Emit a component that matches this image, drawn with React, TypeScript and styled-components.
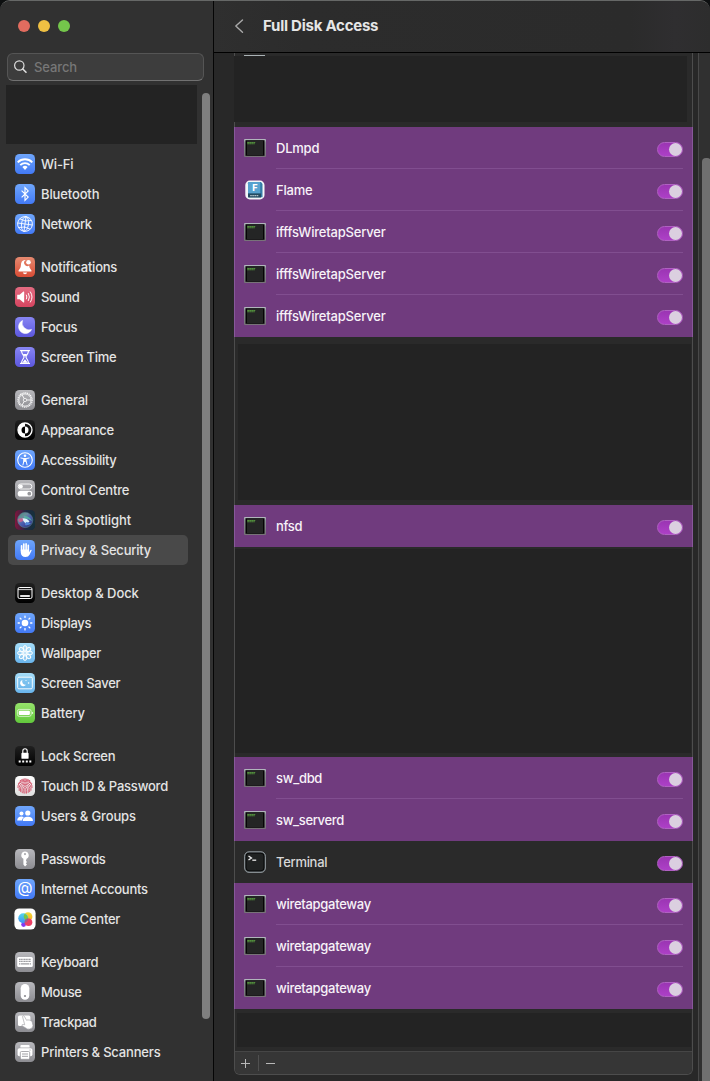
import React from "react";
import styled, { createGlobalStyle } from "styled-components";

const GlobalStyle = createGlobalStyle`
  * { box-sizing: border-box; }
  body {
    margin: 0;
    background: #0d0f10;
    font-family: Inter, "Liberation Sans", sans-serif;
    font-size: 13px;
    color: #e4e4e4;
    overflow: hidden;
  }
`;

const Window = styled.div`
  display: flex;
  width: 710px;
  height: 1081px;
  border-top: 1px solid #666867;
  border-radius: 10px 10px 0 0;
  overflow: hidden;
  background: #282828;
`;

const Sidebar = styled.aside`
  display: flex;
  flex-direction: column;
  width: 214px;
  flex: none;
  background: #313131;
  border-right: 1px solid #050505;
`;

const Lights = styled.div`
  display: flex;
  gap: 8px;
  padding: 19px 0 0 18px;
  height: 52px;
`;

const Light = styled.span<{ $color: string }>`
  width: 12px;
  height: 12px;
  border-radius: 50%;
  background: ${(p) => p.$color};
`;

const SearchField = styled.div`
  display: flex;
  align-items: center;
  gap: 7px;
  width: 197px;
  height: 28px;
  margin-left: 7px;
  padding-left: 6px;
  border: 1px solid #555;
  border-bottom-color: #717171;
  border-radius: 6px;
  background: #3d3d3d;
  color: #777;
  letter-spacing: -0.1px;
  font-weight: 500;
`;

const SidebarBody = styled.div`
  display: flex;
  margin-top: 4px;
  flex: 1;
`;

const SidebarContent = styled.div`
  width: 202px;
`;

const AccountMask = styled.div`
  width: 191px;
  height: 59px;
  margin-left: 6px;
  background: #232323;
`;

const SidebarThumb = styled.div`
  width: 8px;
  height: 926px;
  margin-top: 8px;
  border-radius: 4px;
  background: #7f7f7f;
`;

const Nav = styled.nav`
  display: flex;
  flex-direction: column;
  gap: 13px;
  padding: 5px 0 0 8px;
`;

const NavItem = styled.div<{ $selected?: boolean }>`
  display: flex;
  align-items: center;
  gap: 6px;
  width: 180px;
  height: 30px;
  padding-left: 7px;
  border-radius: 5px;
  background: ${(p) => (p.$selected ? "#494949" : "transparent")};
`;

const NavLabel = styled.span<{ $spacing: number }>`
  white-space: nowrap;
  font-weight: 470;
  letter-spacing: ${(p) => p.$spacing}px;
`;

const Tile = styled.span<{ $top: string; $bottom: string }>`
  display: block;
  flex: none;
  width: 20px;
  height: 20px;
  border-radius: 4.5px;
  background: linear-gradient(${(p) => p.$top}, ${(p) => p.$bottom});
  svg { display: block; }
`;

const Main = styled.main`
  display: flex;
  flex-direction: column;
  flex: 1;
  min-width: 0;
`;

const Header = styled.header`
  display: flex;
  align-items: center;
  gap: 17px;
  height: 52px;
  flex: none;
  padding: 0 0 1px 18px;
  border-bottom: 1px solid #000;
  background: linear-gradient(90deg, #2f2f2f, #2c2c2c 18%, #2b2b2b 84%, #2f2e30 93%, #2d2d2d);
`;

const Title = styled.h1`
  margin: 0 0 1px;
  font-size: 15px;
  font-weight: 700;
  letter-spacing: -0.24px;
  color: #e6e6e6;
`;

const Body = styled.div`
  display: flex;
  flex: 1;
  min-height: 0;
  padding-left: 20px;
`;

const List = styled.section`
  display: flex;
  flex-direction: column;
  width: 459px;
  height: 1022px;
  border: 1px solid #4d4d4d;
  border-top: none;
  border-radius: 0 0 6px 6px;
  background: #2a2a2a;
`;

const TopStrip = styled.div`
  height: 74px;
  padding-top: 2px;
`;

const IconSliver = styled.div`
  width: 21px;
  height: 1px;
  margin-left: 9px;
  background: #aab2b5;
`;

const Mask = styled.div<{ $height: number; $before?: number; $after?: number; $left?: number; $right?: number }>`
  flex: none;
  height: ${(p) => p.$height}px;
  margin: ${(p) => p.$before ?? 0}px ${(p) => p.$right ?? 1}px ${(p) => p.$after ?? 0}px ${(p) => p.$left ?? 0}px;
  background: #232323;
`;

const Rows = styled.div<{ $highlight?: boolean }>`
  margin: 0 -1px;
  flex: none;
  border: solid ${(p) => (p.$highlight ? "#87589a" : "#4d4d4d")};
  border-width: 0 1px;
  background: ${(p) => (p.$highlight ? "#703b7e" : "#2a2a2a")};
  color: ${(p) => (p.$highlight ? "#f7f2f8" : "#d8d8d8")};
  font-weight: ${(p) => (p.$highlight ? 550 : 450)};
`;

const Row = styled.div`
  display: flex;
  height: 42px;
  padding: 0 9px 0 9px;
`;

const RowIcon = styled.div`
  display: flex;
  align-items: center;
  width: 32px;
  flex: none;
`;

const RowContent = styled.div<{ $divided?: boolean }>`
  display: flex;
  flex: 1;
  align-items: center;
  justify-content: space-between;
  padding-top: ${(p) => (p.$divided ? 2 : 1)}px;
  border-bottom: ${(p) => (p.$divided ? "1px solid #814e90" : "none")};
`;

const RowName = styled.span<{ $spacing: number }>`
  margin-bottom: 1px;
  letter-spacing: ${(p) => p.$spacing}px;
`;

const Switch = styled.span`
  display: flex;
  justify-content: flex-end;
  width: 26px;
  height: 15px;
  margin-top: 2px;
  border: 1px solid #b061c2;
  border-radius: 8px;
  background: linear-gradient(#9b35b3, #ad40c7);
`;

const Knob = styled.span`
  width: 13px;
  height: 13px;
  border-radius: 50%;
  background: #dbcfe0;
`;

const Footer = styled.footer`
  display: flex;
  align-items: center;
  flex: 1;
  border-top: 1px solid #464646;
  border-radius: 0 0 5px 5px;
  background: #363636;
  svg { display: block; }
`;

const Track = styled.div`
  width: 12px;
  height: 100%;
  margin-left: 5px;
  padding: 105px 0 0 3px;
  border-left: 1px solid #494949;
  background: #303030;
`;

const Thumb = styled.div`
  width: 9px;
  height: 940px;
  border-radius: 4px 4px 0 0;
  background: #707070;
`;

const W = "#fff";
const BLUE: [string, string] = ["#6fa6fb", "#4279f5"];
const GRAY: [string, string] = ["#b8b8bc", "#8c8c91"];
const BLACK: [string, string] = ["#202020", "#000"];
const INDIGO: [string, string] = ["#8785f3", "#5c57de"];
const SKY: [string, string] = ["#a6defa", "#69b4ec"];

const petals = [0, 45, 90, 135, 180, 225, 270, 315];

type Entry = { name: string; colors: [string, string]; art: React.ReactNode; spacing: number };

const groups: Entry[][] = [
  [
    { name: "Wi-Fi", spacing: -0.2, colors: BLUE, art: (
      <g fill="none" stroke={W} strokeWidth="1.9">
        <path d="M2.7 8.3A10.3 10.3 0 0 1 17.3 8.3" /><path d="M5.3 11.1A6.6 6.6 0 0 1 14.7 11.1" />
        <path d="M10 15.9 7.4 13.1A3.7 3.7 0 0 1 12.6 13.1Z" fill={W} stroke="none" />
      </g>) },
    { name: "Bluetooth", spacing: -0.13, colors: BLUE, art: (
      <path d="M6.6 6.7 13.2 13.1 10 16.4V3.6L13.2 6.9 6.6 13.3" fill="none" stroke={W} strokeWidth="1.15" />) },
    { name: "Network", spacing: -0.32, colors: BLUE, art: (
      <g fill="none" stroke={W} strokeWidth=".85" transform="rotate(8 10 10)">
        <circle cx="10" cy="10" r="7.4" /><ellipse cx="10" cy="10" rx="3.5" ry="7.4" />
        <path d="M10 2.6V17.4M2.6 10H17.4M4.2 5.6Q10 8.4 15.8 5.6M4.2 14.4Q10 11.6 15.8 14.4" />
      </g>) },
  ],
  [
    { name: "Notifications", spacing: -0.22, colors: ["#e58a70", "#d94c35"], art: (
      <g fill={W}>
        <path d="M10 3C7 3.2 6 5.4 5.9 8.2 5.8 11 4.6 12 3.7 13.2 3.2 14 3.5 14.6 4.2 14.6H15.8C16.5 14.6 16.8 14 16.3 13.2 15.4 12 14.4 11.2 14.2 8.6A3.3 3.3 0 0 1 10.7 3Z" />
        <circle cx="13.5" cy="5.2" r="2.3" /><path d="M7.8 15.6H12.2Q11.7 17.3 10 17.3T7.8 15.6Z" />
      </g>) },
    { name: "Sound", spacing: -0.3, colors: ["#e36b81", "#d64560"], art: (
      <g fill="none" stroke={W} strokeLinecap="round">
        <path d="M2.2 7.7H4.6L8.4 4.5Q9.2 4.1 9.2 5V15Q9.2 15.9 8.4 15.5L4.6 12.3H2.2Z" fill={W} stroke="none" />
        <path d="M11.4 8Q12.5 10 11.4 12" strokeWidth="1" /><path d="M13.4 6.4Q15.6 10 13.4 13.6M15.4 4.9Q18.8 10 15.4 15.1" strokeWidth=".95" />
      </g>) },
    { name: "Focus", spacing: -0.22, colors: INDIGO, art: (
      <path d="M7.6 3.5A6.8 6.8 0 1 0 16.6 12.4 7 7 0 0 1 7.6 3.5Z" fill={W} stroke={W} strokeWidth=".5" strokeLinejoin="round" />) },
    { name: "Screen Time", spacing: -0.26, colors: INDIGO, art: (
      <g fill="none" stroke={W} strokeLinecap="round">
        <path d="M5.6 3.6H14.4M5.6 16.4H14.4" strokeWidth="1.4" />
        <path d="M6.6 4C6.5 7.3 9 8.3 9 10S6.5 12.7 6.6 16M13.4 4C13.5 7.3 11 8.3 11 10S13.5 12.7 13.4 16" strokeWidth="1.1" />
        <path d="M7.7 7H12.3L10 9.8ZM7.2 15.7 10 12.2 12.8 15.7Z" fill={W} stroke="none" />
      </g>) },
  ],
  [
    { name: "General", spacing: -0.22, colors: GRAY, art: (
      <g fill="none" stroke={W}>
        <circle cx="10" cy="10" r="6.2" strokeWidth=".9" />
        <circle cx="10" cy="10" r="7.2" strokeWidth="1.1" strokeDasharray="1.1 .785" />
        <circle cx="10" cy="10" r="1.7" strokeWidth=".7" />
        <path d="M11.7 10H16M9.2 8.6 7 4.7M9.2 11.4 7 15.3" strokeWidth=".9" />
      </g>) },
    { name: "Appearance", spacing: -0.3, colors: BLACK, art: (
      <g>
        <circle cx="10" cy="10" r="7" fill="none" stroke={W} strokeWidth="1.3" />
        <path d="M10 3A7 7 0 0 0 10 17Z" fill={W} />
        <path d="M10 6.5A3.5 3.5 0 0 0 10 13.5Z" fill="#000" /><path d="M10 6.5A3.5 3.5 0 0 1 10 13.5Z" fill={W} />
      </g>) },
    { name: "Accessibility", spacing: -0.27, colors: BLUE, art: (
      <g fill="none" stroke={W} strokeLinecap="round" strokeLinejoin="round">
        <circle cx="10" cy="10" r="7.3" strokeWidth="1.1" /><circle cx="10" cy="5.8" r="1.3" fill={W} stroke="none" />
        <path d="M5.9 8 8.9 8.6H11.1L14.1 8" strokeWidth="1" />
        <path d="M8.8 11.4 7.9 15M11.2 11.4 12.1 15" strokeWidth="1" /><path d="M8.9 8.6H11.1V11.4H8.9Z" fill={W} strokeWidth=".8" />
      </g>) },
    { name: "Control Centre", spacing: -0.18, colors: GRAY, art: (
      <g>
        <rect x="3.2" y="4" width="13.6" height="5" rx="2.5" fill="none" stroke={W} strokeWidth=".9" /><circle cx="5.8" cy="6.5" r="2" fill={W} />
        <rect x="2.7" y="10.8" width="14.6" height="5.8" rx="2.9" fill={W} /><circle cx="14.3" cy="13.7" r="1.9" fill="#97979b" />
      </g>) },
    { name: "Siri & Spotlight", spacing: -0.07, colors: ["#3a1830", "#171d38"], art: (
      <g>
        <defs>
          <linearGradient id="siriEdge"><stop offset="0" stopColor="#7f163d" /><stop offset=".55" stopColor="#202944" /><stop offset="1" stopColor="#15313a" /></linearGradient>
          <linearGradient id="siriBall" x2=".8" y2="1"><stop stopColor="#349279" /><stop offset=".35" stopColor="#6b8b9a" /><stop offset=".6" stopColor="#4a5cb1" /><stop offset="1" stopColor="#303778" /></linearGradient>
        </defs>
        <rect width="20" height="20" rx="4.5" fill="url(#siriEdge)" />
        <circle cx="10.2" cy="10" r="7.6" fill="url(#siriBall)" stroke="#5b7f96" strokeWidth=".6" />
        <path d="M3 9Q7 7 10 9.6 6 13 4 12Z" fill="#d65c8e" opacity=".8" /><path d="M9 6Q15 6 17 11 12 8 9 9Z" fill="#55bda3" opacity=".75" />
        <path d="M7.5 8.2Q12 8 14.5 11.5 12 14 10.4 13.2 8 12 7.5 8.2Z" fill="#d9eff8" /><path d="M11 12Q14 12 16 13.5 13 16 10 15Z" fill="#5085d7" />
      </g>) },
    { name: "Privacy & Security", spacing: -0.2, colors: BLUE, art: (
      <g fill="none" stroke={W} strokeLinecap="round">
        <path d="M6.6 5.8V11M8.8 4V10M11.1 3.9V10M13.3 5.2V11" strokeWidth="1.65" />
        <path d="M5.8 9.4H14.1V12.2L15.5 10Q16.6 9.3 16.7 10.3L14.7 14.4Q13.4 17 10.5 17C7.6 17 5.8 15 5.8 12.4Z" fill={W} stroke="none" />
      </g>) },
  ],
  [
    { name: "Desktop & Dock", spacing: -0.08, colors: BLACK, art: (
      <g fill="none" stroke={W}><rect x="3" y="4.5" width="14" height="11" rx="1.5" strokeWidth="1" /><path d="M3 6.6H17" strokeWidth=".8" /><path d="M5.2 13H14.8" strokeWidth="1.8" /></g>) },
    { name: "Displays", spacing: -0.3, colors: BLUE, art: (
      <g stroke={W} strokeWidth="1.3" strokeLinecap="round"><circle cx="10" cy="10" r="3.3" fill={W} stroke="none" />
        {petals.map((a) => <path key={a} d="M10 3.1V4.4" transform={`rotate(${a} 10 10)`} />)}</g>) },
    { name: "Wallpaper", spacing: -0.28, colors: SKY, art: (
      <g fill="none" stroke={W} strokeWidth=".95"><circle cx="10" cy="10" r="1.9" fill={W} fillOpacity=".5" />
        {petals.map((a) => <ellipse key={a} cx="10" cy="5" rx="1.8" ry="2.4" fill={W} fillOpacity=".2" transform={`rotate(${a} 10 10)`} />)}</g>) },
    { name: "Screen Saver", spacing: -0.29, colors: SKY, art: (
      <g><rect x="2.7" y="4.2" width="14.6" height="11.6" rx="1.2" fill="#5fb0e6" fillOpacity=".35" stroke={W} strokeWidth=".9" />
        <path d="M7.4 7A3.2 3.2 0 1 0 11 11.8 3.5 3.5 0 0 1 7.4 7Z" fill={W} /><circle cx="11" cy="7.5" r=".6" fill={W} /><circle cx="13.6" cy="10" r=".8" fill={W} /></g>) },
    { name: "Battery", spacing: -0.1, colors: ["#96e36b", "#62c83c"], art: (
      <g><rect x="2.4" y="6.4" width="13.8" height="7" rx="2" fill="none" stroke={W} strokeWidth=".8" strokeOpacity=".8" /><rect x="3.7" y="7.7" width="11.2" height="4.4" rx="1" fill={W} /><path d="M17.2 8.7Q18.2 9.2 18.2 9.9T17.2 11.1Z" fill={W} /></g>) },
  ],
  [
    { name: "Lock Screen", spacing: -0.27, colors: BLACK, art: (
      <g fill={W}><rect x="6.4" y="6.8" width="7.2" height="6" rx=".9" /><path d="M7.8 7V4.9A2.2 2.2 0 0 1 12.2 4.9V7" fill="none" stroke={W} strokeWidth="1.1" />
        <path d="M3.7 14.4h2v2.1h-2zM7.2 14.4h2v2.1h-2zM10.8 14.4h2v2.1h-2zM14.3 14.4h2v2.1h-2z" /></g>) },
    { name: "Touch ID & Password", spacing: -0.22, colors: ["#fff", "#dedede"], art: (
      <g fill="none" stroke="#d4576f" strokeWidth=".95" strokeLinecap="round">
        <path d="M5 4.7Q10 1 15 4.7M3.2 7.5Q5.2 4.2 10 4.1T16.8 7.5M2.9 11.5Q2.5 5.6 10 5.5T17.1 11.5M4.2 14.5Q3 7 10 6.9T16 14.3M5.7 15.8Q4.2 8.4 10 8.3T14.7 15.7M7.3 16.8Q5.8 9.8 10 9.7T13.2 16.5M9 17.2Q7.8 11.1 10 11.1T11.5 17.2M10 12.6V17" />
      </g>) },
    { name: "Users & Groups", spacing: -0.15, colors: BLUE, art: (
      <g fill={W}><circle cx="6.5" cy="7.4" r="2" /><path d="M2.2 14.4C2.2 11.7 4 10.5 6.4 10.5Q8 10.5 8.8 11.2 7.1 12.5 7 14.4Z" /><circle cx="12.8" cy="7" r="2.6" /><path d="M7.8 14.9C7.7 12 9.9 10.7 12.8 10.7S18 12 17.9 14.9Z" /></g>) },
  ],
  [
    { name: "Passwords", spacing: -0.38, colors: GRAY, art: (
      <g fill={W}><path fillRule="evenodd" d="M10 2.5A3.8 3.8 0 0 0 8.4 9.7V15.6L10 17.4 12 15.4 10.8 14.2 12 13 10.9 11.8 11.6 9.7A3.8 3.8 0 0 0 10 2.5ZM10 4A1.1 1.1 0 1 1 10 6.2 1.1 1.1 0 0 1 10 4Z" /></g>) },
    { name: "Internet Accounts", spacing: -0.23, colors: BLUE, art: (
      <text x="10" y="14.4" textAnchor="middle" fill={W} fontSize="15.5" fontFamily="Inter, sans-serif">@</text>) },
    { name: "Game Center", spacing: -0.23, colors: ["#fff", "#fff"], art: (
      <g>
        <defs><linearGradient id="gcBlue" x2="0" y2="1"><stop stopColor="#55d7ed" /><stop offset="1" stopColor="#3f8df5" /></linearGradient><linearGradient id="gcYellow" x2="0" y2="1"><stop stopColor="#f5dc36" /><stop offset="1" stopColor="#f3a927" /></linearGradient></defs>
        <rect x="-.6" y="-.6" width="21.2" height="21.2" rx="4.8" fill="#fff" />
        <circle cx="8.6" cy="15.6" r="2.4" fill="#853af1" /><circle cx="13" cy="7.7" r="4.4" fill="url(#gcYellow)" /><circle cx="8.3" cy="9.2" r="5" fill="url(#gcBlue)" />
        <path d="M9.7 4.8A5 5 0 0 1 12.3 12 4.5 4.5 0 0 1 9.7 4.8Z" fill="#76c848" /><circle cx="13.5" cy="13.2" r="3.8" fill="#ec4165" /><path d="M9.7 13.2A3.8 3.8 0 0 1 13.2 9.6 5 5 0 0 1 9.8 14Z" fill="#9a638c" />
      </g>) },
  ],
  [
    { name: "Keyboard", spacing: -0.3, colors: GRAY, art: (
      <g><rect x="2.2" y="5" width="15.6" height="10" rx="1.5" fill={W} /><path d="M4 7.3H16M4 9.4H16" stroke="#9c9ca0" strokeWidth="1.3" strokeDasharray="1.3 .35" /><path d="M4 11.8H5.4M6 11.8H14M14.6 11.8H16" stroke="#9c9ca0" strokeWidth="1.3" /></g>) },
    { name: "Mouse", spacing: -0.3, colors: GRAY, art: (
      <g><rect x="5.7" y="2" width="8.6" height="15.8" rx="4.3" fill={W} /><circle cx="10" cy="14" r="1.1" fill="#8c8c91" /></g>) },
    { name: "Trackpad", spacing: -0.37, colors: GRAY, art: (
      <g><rect x="3" y="3.5" width="12.4" height="10.5" rx="1.5" fill={W} /><path d="M7.5 4.5Q8 3 9.3 4.3L11.7 8.4Q13 7.2 14 8.2 15 7.6 15.7 8.7 17 8.7 17.2 10L18 13.5Q17.9 16.7 14.5 17.1 12 17.4 10.7 15.9L6.9 13.8Q6.7 12.4 8.1 12.5L9.7 12.7Z" fill={W} stroke="#9b9b9f" strokeWidth=".6" /></g>) },
    { name: "Printers & Scanners", spacing: -0.17, colors: GRAY, art: (
      <g><path d="M5.4 5.6V4Q5.4 3 6.4 3H13.6Q14.6 3 14.6 4V5.6Z" fill={W} /><rect x="2.6" y="6.3" width="14.8" height="8" rx="1.8" fill={W} /><rect x="5.3" y="9.5" width="9.4" height="7.8" rx="1.2" fill={W} stroke="#95959a" strokeWidth=".8" /><path d="M7 12H13M7 14.3H13" stroke="#95959a" strokeWidth=".9" /><circle cx="15" cy="8" r=".6" fill="#95959a" /></g>) },
  ],
];

const ExecIcon = () => (
  <svg width="22" height="20" viewBox="0 0 22 20">
    <defs><linearGradient id="bezel" x2="0" y2="1"><stop stopColor="#b5bac0" /><stop offset=".2" stopColor="#888b91" /><stop offset="1" stopColor="#777278" /></linearGradient></defs>
    <rect x="0" y="1.1" width="22" height="17.8" rx="1" fill="url(#bezel)" />
    <rect x="1.5" y="2.2" width="19" height="15.6" fill="#050505" />
    <rect x="3" y="3" width="16" height="14" fill="#242525" />
    <path d="M3.3 4.5H11.5M3.3 5.8H10.7" stroke="#579b3f" strokeWidth="1.1" strokeDasharray="1.6 .4" />
  </svg>
);

const FlameIcon = () => (
  <svg width="22" height="22" viewBox="0 0 22 22">
    <rect x="1.3" y="1.6" width="19.2" height="18.8" rx="4.5" fill="#f4f7f9" />
    <path d="M4 4.2Q4 3 5.2 3H17L18.5 5V18.3H4Z" fill="#347ba5" /><path d="M4 4.2Q4 3 5.2 3H16.2V14.5H4Z" fill="#57a2cf" />
    <path d="M4 14.5H17V18.6H5Q4 18.6 4 17.6Z" fill="#244b61" />
    <text x="10.9" y="12.2" fontSize="9" fontWeight="800" fontFamily="Inter, sans-serif" fill="#fff" textAnchor="middle">F</text>
    <path d="M6.2 16.6H14.8" stroke="#afc0c9" strokeWidth="1.2" strokeDasharray="1.6 .5" />
  </svg>
);

const TerminalIcon = () => (
  <svg width="22" height="22" viewBox="0 0 22 22">
    <rect x=".5" y=".7" width="21" height="20.8" rx="4.5" fill="#555b5e" stroke="#858c90" />
    <rect x="2" y="2.2" width="18" height="17.6" rx="3" fill="#202222" stroke="#050606" />
    <path d="M4.5 5 7.4 7 4.5 9" fill="none" stroke="#eee" strokeWidth="1.4" /><path d="M8.3 9.2H12.2" stroke="#ddd" strokeWidth="1.4" />
  </svg>
);

const icons = { exec: ExecIcon, flame: FlameIcon, terminal: TerminalIcon };

type AppEntry = { name: string; icon?: keyof typeof icons; spacing: number };

const AppRows = ({ items, highlight }: { items: AppEntry[]; highlight?: boolean }) => (
  <Rows $highlight={highlight}>
    {items.map((item, i) => {
      const Icon = icons[item.icon ?? "exec"];
      return (
        <Row key={i}>
          <RowIcon><Icon /></RowIcon>
          <RowContent $divided={i < items.length - 1}>
            <RowName $spacing={item.spacing}>{item.name}</RowName>
            <Switch><Knob /></Switch>
          </RowContent>
        </Row>
      );
    })}
  </Rows>
);

const wiretap: AppEntry = { name: "ifffsWiretapServer", spacing: -0.2 };
const gateway: AppEntry = { name: "wiretapgateway", spacing: -0.29 };

export default function App() {
  return (
    <>
      <GlobalStyle />
      <Window>
        <Sidebar>
          <Lights><Light $color="#e26c5f" /><Light $color="#efc043" /><Light $color="#74c64b" /></Lights>
          <SearchField>
            <svg width="13" height="14" viewBox="0 0 13 14" fill="none" stroke="#ddd" strokeLinecap="round">
              <circle cx="5.3" cy="5.5" r="4.7" strokeWidth="1.2" /><path d="M8.8 9 12 12.3" strokeWidth="1.6" />
            </svg>
            Search
          </SearchField>
          <SidebarBody>
            <SidebarContent>
              <AccountMask />
              <Nav>
                {groups.map((group, g) => (
                  <div key={g}>
                    {group.map((e) => (
                      <NavItem key={e.name} $selected={e.name === "Privacy & Security"}>
                        <Tile $top={e.colors[0]} $bottom={e.colors[1]}>
                          <svg width="20" height="20" viewBox="0 0 20 20" overflow="visible">{e.art}</svg>
                        </Tile>
                        <NavLabel $spacing={e.spacing}>{e.name}</NavLabel>
                      </NavItem>
                    ))}
                  </div>
                ))}
              </Nav>
            </SidebarContent>
            <SidebarThumb />
          </SidebarBody>
        </Sidebar>
        <Main>
          <Header>
            <svg width="14" height="16" viewBox="0 0 14 16" fill="none" stroke="#a9a9a9" strokeWidth="1.4" strokeLinecap="round" strokeLinejoin="round"><path d="M10.5 1.9 3.8 8.1 10.5 14.3" /></svg>
            <Title>Full Disk Access</Title>
          </Header>
          <Body>
            <List>
              <TopStrip>
                <IconSliver />
                <Mask $height={66} $left={-1} $right={5} />
              </TopStrip>
              <AppRows highlight items={[{ name: "DLmpd", spacing: -0.22 }, { name: "Flame", icon: "flame", spacing: -0.2 }, wiretap, wiretap, wiretap]} />
              <Mask $height={156} $before={7} $after={5} $left={3} />
              <AppRows highlight items={[{ name: "nfsd", spacing: -0.35 }]} />
              <Mask $height={204} $before={2} $after={4} />
              <AppRows highlight items={[{ name: "sw_dbd", spacing: -0.3 }, { name: "sw_serverd", spacing: -0.35 }]} />
              <AppRows items={[{ name: "Terminal", icon: "terminal", spacing: -0.3 }]} />
              <AppRows highlight items={[gateway, gateway, gateway]} />
              <Mask $height={34} $before={4} $after={4} $left={2} />
              <Footer>
                <svg width="60" height="22" viewBox="0 0 60 22" fill="none" stroke="#b8b8b8" strokeWidth="1">
                  <path d="M6 11.5H15M10.5 7V16M31 11.5H40" /><path d="M23.5 3V19" stroke="#505050" />
                </svg>
              </Footer>
            </List>
            <Track><Thumb /></Track>
          </Body>
        </Main>
      </Window>
    </>
  );
}
